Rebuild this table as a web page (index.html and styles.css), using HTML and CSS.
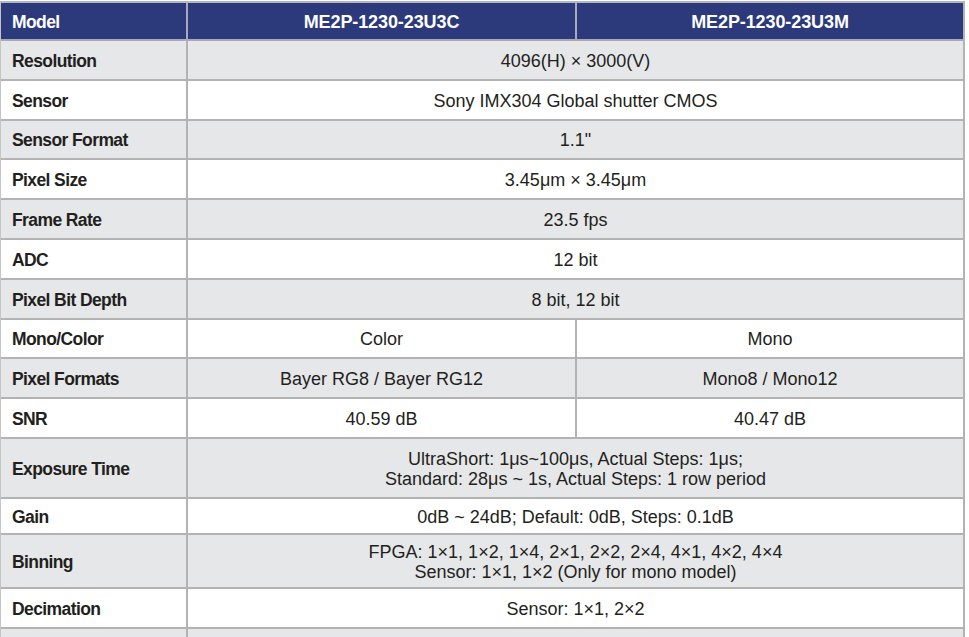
FILE: index.html
```html
<!DOCTYPE html>
<html>
<head>
<meta charset="utf-8">
<link rel="stylesheet" href="styles.css">
</head>
<body>
<div class="spec">
  <div class="row head h38">
    <div class="cell label">Model</div>
    <div class="cell val">ME2P-1230-23U3C</div>
    <div class="cell val">ME2P-1230-23U3M</div>
  </div>
  <div class="row gray h40">
    <div class="cell label">Resolution</div>
    <div class="cell val span">4096(H) × 3000(V)</div>
  </div>
  <div class="row h40">
    <div class="cell label">Sensor</div>
    <div class="cell val span">Sony IMX304 Global shutter CMOS</div>
  </div>
  <div class="row gray h39">
    <div class="cell label">Sensor Format</div>
    <div class="cell val span">1.1"</div>
  </div>
  <div class="row h40">
    <div class="cell label">Pixel Size</div>
    <div class="cell val span">3.45μm × 3.45μm</div>
  </div>
  <div class="row gray h40">
    <div class="cell label">Frame Rate</div>
    <div class="cell val span">23.5 fps</div>
  </div>
  <div class="row h40">
    <div class="cell label">ADC</div>
    <div class="cell val span">12 bit</div>
  </div>
  <div class="row gray h40">
    <div class="cell label">Pixel Bit Depth</div>
    <div class="cell val span">8 bit, 12 bit</div>
  </div>
  <div class="row h39">
    <div class="cell label">Mono/Color</div>
    <div class="cell val">Color</div>
    <div class="cell val">Mono</div>
  </div>
  <div class="row gray h40">
    <div class="cell label">Pixel Formats</div>
    <div class="cell val">Bayer RG8 / Bayer RG12</div>
    <div class="cell val">Mono8 / Mono12</div>
  </div>
  <div class="row h40">
    <div class="cell label">SNR</div>
    <div class="cell val">40.59 dB</div>
    <div class="cell val">40.47 dB</div>
  </div>
  <div class="row gray h60">
    <div class="cell label">Exposure Time</div>
    <div class="cell val span">UltraShort: 1μs~100μs, Actual Steps: 1μs;<br>Standard: 28μs ~ 1s, Actual Steps: 1 row period</div>
  </div>
  <div class="row h36">
    <div class="cell label">Gain</div>
    <div class="cell val span">0dB ~ 24dB; Default: 0dB, Steps: 0.1dB</div>
  </div>
  <div class="row gray h54">
    <div class="cell label">Binning</div>
    <div class="cell val span">FPGA: 1×1, 1×2, 1×4, 2×1, 2×2, 2×4, 4×1, 4×2, 4×4<br>Sensor: 1×1, 1×2 (Only for mono model)</div>
  </div>
  <div class="row h40">
    <div class="cell label">Decimation</div>
    <div class="cell val span">Sensor: 1×1, 2×2</div>
  </div>
  <div class="row gray h40">
    <div class="cell label">&nbsp;</div>
    <div class="cell val span">&nbsp;</div>
  </div>
</div>
</body>
</html>
```

FILE: styles.css
```css
html, body {
  margin: 0;
  padding: 0;
  background: #ffffff;
}

body {
  font-family: "Liberation Sans", Arial, Helvetica, sans-serif;
  color: #231f20;
  overflow: hidden;
}

.spec {
  width: 965px;
  margin-top: 1px;
  border-top: 2px solid #b4b6c0;
  border-left: 1px solid #c4c4c4;
  border-right: 2px solid #b3b3b3;
  box-sizing: border-box;
}

.row {
  display: grid;
  grid-template-columns: 185px 389px 1fr;
  border-bottom: 2px solid #b3b3b3;
  box-sizing: border-box;
  background: #ffffff;
}

.row.gray {
  background: #e6e7e9;
}

.row.head {
  background: #2c3a7b;
  border-bottom-color: #a7aabb;
}

.h36 { height: 36px; }
.h38 { height: 38px; }
.h39 { height: 39px; }
.h40 { height: 40px; }
.h54 { height: 54px; }
.h60 { height: 60px; }

.cell {
  display: flex;
  align-items: center;
  box-sizing: border-box;
  line-height: 20px;
  padding-top: 1px;
}

.cell + .cell {
  border-left: 2px solid #b3b3b3;
}

.head .cell + .cell {
  border-left-color: #a7aabb;
}

.label {
  padding-left: 11px;
  font-weight: bold;
  font-size: 17.5px;
  letter-spacing: -0.6px;
}

.val {
  justify-content: center;
  text-align: center;
  font-size: 18px;
}

.span {
  grid-column: span 2;
}

.head .cell {
  color: #ffffff;
  font-weight: bold;
}

.head .val {
  font-size: 18px;
  letter-spacing: -0.1px;
}
```
